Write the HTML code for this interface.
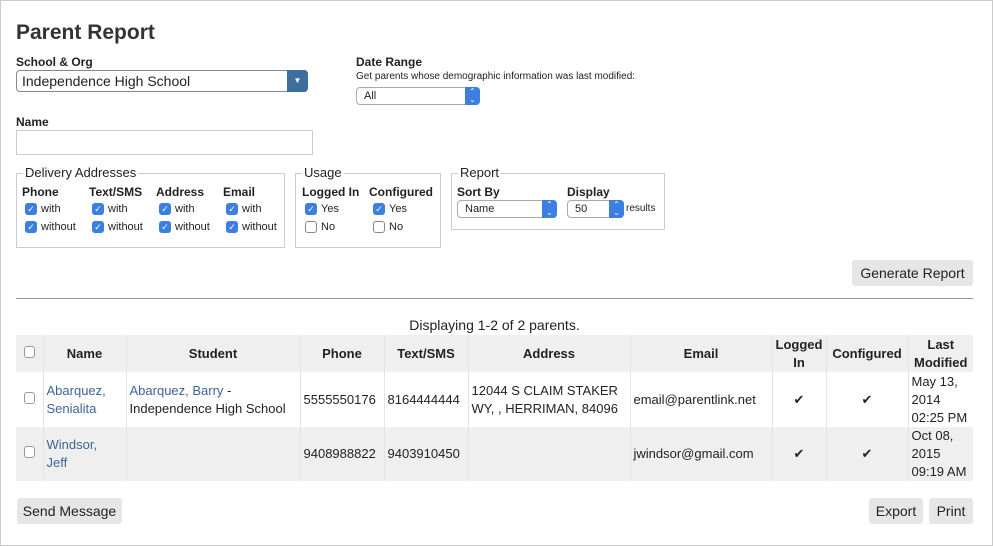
<!DOCTYPE html>
<html><head><style>
*{box-sizing:border-box}
body{margin:0;width:993px;height:546px;overflow:hidden;font-family:"Liberation Sans",sans-serif;color:#222;background:#fff}
.frame{position:absolute;left:0;top:0;width:993px;height:546px;border:1px solid #ccc}
.a{position:absolute;white-space:nowrap}
.b{font-weight:bold;font-size:12px}
.sel{position:absolute;border:1px solid #aaa;border-radius:4px;background:#fff}
.fs{position:absolute;border:1px solid #ccc}
.lg{position:absolute;top:-9px;left:6px;background:#fff;padding:0 2px;font-size:13px}
.cb{display:inline-block;width:12px;height:12px;border-radius:3px;background:#3d7fe0;color:#fff;font-size:9px;line-height:12px;text-align:center;margin-right:4px;flex:none}
.cb.o{background:#fff;border:1px solid #888}
.opt{font-size:11px;height:14px;display:flex;align-items:center;line-height:14px}
.btn{position:absolute;background:#e6e6e6;border-radius:3px;font-size:14px;text-align:center;line-height:26px;height:26px}
table{position:absolute;left:16px;top:335px;width:957px;border-collapse:collapse;font-size:13px}
td,th{padding:0 3px;border-left:1px solid #e4e4e4;vertical-align:middle;line-height:18px}
th{background:#efefef;height:37px;font-size:13px}
tr.r1 td{height:55px}
tr.r2 td{height:54px;background:#efefef}
a{color:#3b6598;text-decoration:none}
.ck{display:inline-block;width:11px;height:12px;border:1px solid #999;border-radius:3px;background:#fff}
</style></head><body>
<div class="frame"></div>
<div class="a" style="left:16px;top:21px;font-size:21px;font-weight:bold;color:#333">Parent Report</div>
<div class="a b" style="left:16px;top:55px">School &amp; Org</div>
<div class="sel" style="left:16px;top:70px;width:292px;height:22px;border-color:#888;font-size:14px;line-height:20px;padding-left:5px">Independence High School
<div style="position:absolute;right:-1px;top:-1px;width:21px;height:22px;background:#3e6e9e;border-radius:0 4px 4px 0;color:#fff;font-size:8px;text-align:center;line-height:22px">▼</div></div>
<div class="a b" style="left:356px;top:55px">Date Range</div>
<div class="a" style="left:356px;top:71px;font-size:10px">Get parents whose demographic information was last modified:</div>
<div class="sel" style="left:356px;top:87px;width:124px;height:18px;font-size:11px;line-height:16px;padding-left:7px">All
<div style="position:absolute;right:-1px;top:-1px;width:15px;height:18px;background:#3d7fe0;border-radius:0 4px 4px 0;color:#fff;font-size:8px;text-align:center;line-height:8px;padding-top:1px">⌃<br>⌄</div></div>
<div class="a b" style="left:16px;top:115px">Name</div>
<div class="a" style="left:16px;top:130px;width:297px;height:25px;border:1px solid #ccc"></div>

<div class="fs" style="left:16px;top:173px;width:269px;height:75px"><div class="lg">Delivery Addresses</div></div>
<div class="fs" style="left:295px;top:173px;width:146px;height:75px"><div class="lg">Usage</div></div>
<div class="fs" style="left:451px;top:173px;width:214px;height:57px"><div class="lg">Report</div></div>

<div class="a b" style="left:22px;top:185px">Phone</div>
<div class="a b" style="left:89px;top:185px">Text/SMS</div>
<div class="a b" style="left:156px;top:185px">Address</div>
<div class="a b" style="left:223px;top:185px">Email</div>
<div class="a opt" style="left:25px;top:202px"><span class="cb">✓</span>with</div>
<div class="a opt" style="left:25px;top:220px"><span class="cb">✓</span>without</div>
<div class="a opt" style="left:92px;top:202px"><span class="cb">✓</span>with</div>
<div class="a opt" style="left:92px;top:220px"><span class="cb">✓</span>without</div>
<div class="a opt" style="left:159px;top:202px"><span class="cb">✓</span>with</div>
<div class="a opt" style="left:159px;top:220px"><span class="cb">✓</span>without</div>
<div class="a opt" style="left:226px;top:202px"><span class="cb">✓</span>with</div>
<div class="a opt" style="left:226px;top:220px"><span class="cb">✓</span>without</div>

<div class="a b" style="left:302px;top:185px">Logged In</div>
<div class="a b" style="left:369px;top:185px">Configured</div>
<div class="a opt" style="left:305px;top:202px"><span class="cb">✓</span>Yes</div>
<div class="a opt" style="left:305px;top:220px"><span class="cb o"></span>No</div>
<div class="a opt" style="left:373px;top:202px"><span class="cb">✓</span>Yes</div>
<div class="a opt" style="left:373px;top:220px"><span class="cb o"></span>No</div>

<div class="a b" style="left:457px;top:185px">Sort By</div>
<div class="a b" style="left:567px;top:185px">Display</div>
<div class="sel" style="left:457px;top:200px;width:100px;height:18px;font-size:11px;line-height:16px;padding-left:7px">Name
<div style="position:absolute;right:-1px;top:-1px;width:15px;height:18px;background:#3d7fe0;border-radius:0 4px 4px 0;color:#fff;font-size:8px;text-align:center;line-height:8px;padding-top:1px">⌃<br>⌄</div></div>
<div class="sel" style="left:567px;top:200px;width:57px;height:18px;font-size:11px;line-height:16px;padding-left:7px">50
<div style="position:absolute;right:-1px;top:-1px;width:15px;height:18px;background:#3d7fe0;border-radius:0 4px 4px 0;color:#fff;font-size:8px;text-align:center;line-height:8px;padding-top:1px">⌃<br>⌄</div></div>
<div class="a" style="left:626px;top:203px;font-size:10px">results</div>

<div class="btn" style="left:852px;top:260px;width:121px">Generate Report</div>
<div class="a" style="left:16px;top:298px;width:957px;height:1px;background:#999"></div>
<div class="a" style="left:0;top:317px;width:989px;text-align:center;font-size:14px">Displaying 1-2 of 2 parents.</div>

<table>
<tr><th style="width:27px;border-left:none"><span class="ck"></span></th><th style="width:83px">Name</th><th style="width:174px">Student</th><th style="width:84px">Phone</th><th style="width:84px">Text/SMS</th><th style="width:162px">Address</th><th style="width:142px">Email</th><th style="width:54px">Logged In</th><th style="width:82px">Configured</th><th>Last Modified</th></tr>
<tr class="r1"><td style="border-left:none;text-align:center"><span class="ck"></span></td><td><a>Abarquez, Senialita</a></td><td><a>Abarquez, Barry</a> - Independence High School</td><td>5555550176</td><td>8164444444</td><td>12044 S CLAIM STAKER WY, , HERRIMAN, 84096</td><td>email@parentlink.net</td><td style="text-align:center">✔</td><td style="text-align:center">✔</td><td>May 13, 2014 02:25 PM</td></tr>
<tr class="r2"><td style="border-left:none;text-align:center"><span class="ck"></span></td><td><a>Windsor,<br>Jeff</a></td><td></td><td>9408988822</td><td>9403910450</td><td></td><td>jwindsor@gmail.com</td><td style="text-align:center">✔</td><td style="text-align:center">✔</td><td>Oct 08, 2015 09:19 AM</td></tr>
</table>

<div class="btn" style="left:17px;top:498px;width:105px">Send Message</div>
<div class="btn" style="left:869px;top:498px;width:54px">Export</div>
<div class="btn" style="left:929px;top:498px;width:44px">Print</div>
</body></html>
